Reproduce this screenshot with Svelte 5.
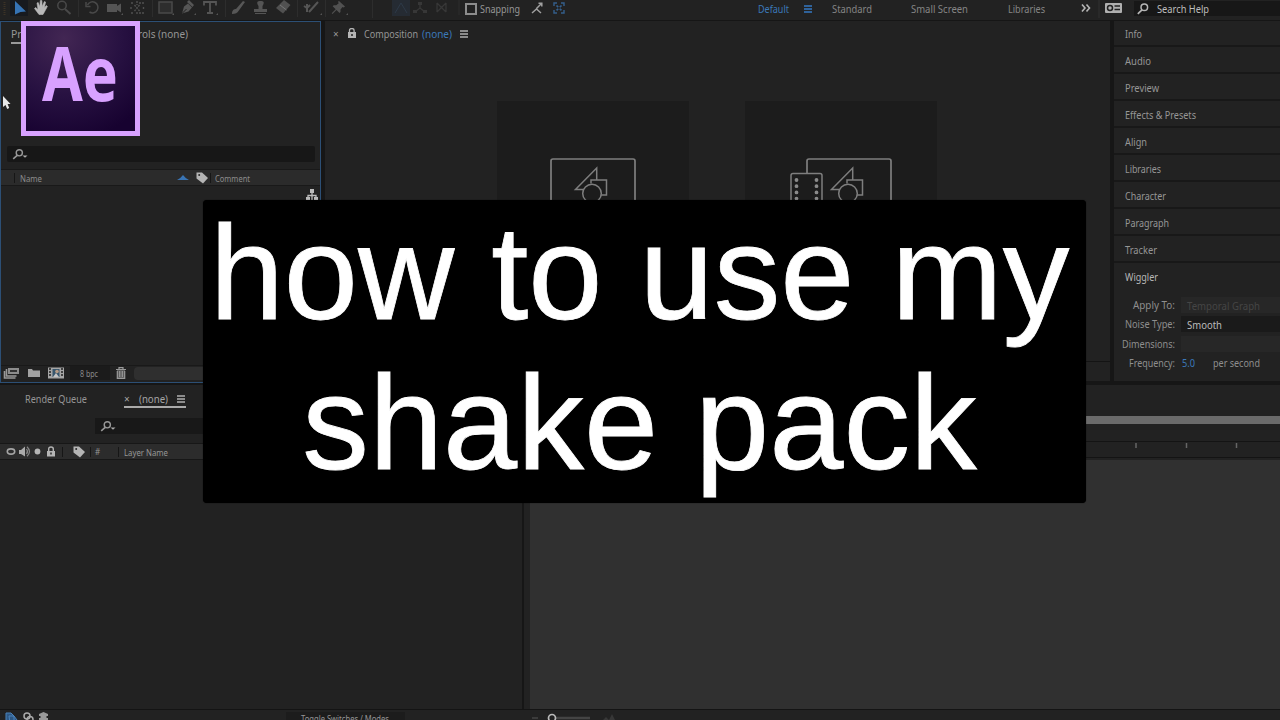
<script lang="ts">
  const workspaces = [
    { name: 'Standard', left: 20, width: 40 },
    { name: 'Small Screen', left: 39, width: 57 },
    { name: 'Libraries', left: 40, width: 37 },
  ];

  const panels = [
    { name: 'Info', width: 17 },
    { name: 'Audio', width: 26 },
    { name: 'Preview', width: 34 },
    { name: 'Effects & Presets', width: 71 },
    { name: 'Align', width: 22 },
    { name: 'Libraries', width: 36 },
    { name: 'Character', width: 41 },
    { name: 'Paragraph', width: 44 },
    { name: 'Tracker', width: 32 },
  ];
</script>

<!-- text squeezed to a fixed run length, the UI face is narrower than the fallback -->
{#snippet label(text: string, width: number, size = 10.5)}
  <svg class="label" {width} height="14" style="font-size:{size}px">
    <text x="0" y="11" textLength={width} lengthAdjust="spacingAndGlyphs">{text}</text>
  </svg>
{/snippet}

{#snippet tag()}
  <svg class="icon" width="12" height="12" viewBox="0 0 12 12">
    <path d="M.5.500h5.500l6 5.500-5 5.500-6.500-5z" fill="#b5b5b5" />
    <circle cx="3.200" cy="3" r="1" fill="#2b2b2b" />
  </svg>
{/snippet}

{#snippet search()}
  <svg class="icon" width="16" height="12" viewBox="0 0 16 12">
    <circle cx="7.300" cy="3.800" r="3.100" fill="none" stroke="#999" stroke-width="1.400" />
    <path d="M5.200 6.300L1.200 9.800" stroke="#999" stroke-width="1.600" />
    <path d="M10.500 6.500h5L13 8.700z" fill="#aaa" />
  </svg>
{/snippet}

{#snippet shapes()}
  <g fill="none" stroke="#7e7e7e" stroke-width="1.5">
    <path d="M36 31.500h-10.500L46.700 10v11.500M41 25.500v-3.500h15.500v15h-6" />
    <circle cx="42" cy="35.500" r="9.300" fill="#1c1c1c" />
  </g>
{/snippet}

<div class="app">
  <header>
    <svg class="tools" width="464" height="20" viewBox="0 0 464 20">
      <path d="M4.500 2v14" stroke="#3c3326" stroke-width="2" stroke-dasharray="1 1" />
      <path d="M10 0h18v16H10z" fill="#171a1f" />
      <path d="M15 1L26 11.500l-5.500.500-5.500 2.500z" fill="#3674b5" />
      <path
        d="M39 14.500l-4.500-6 1-1 2.500 2L37 3l1.200-.5 1.600 4.300.5-6.300h1.600l.2 6 2.300-5 1.200.6-1.200 5.400 2-2 1 .9-3 5.600-1.400 2.500z"
        fill="#b8b8b8"
        stroke="#b8b8b8"
        stroke-width=".6"
      />
      <g fill="none" stroke="#494949" stroke-width="1.500">
        <circle cx="62" cy="5.500" r="4.200" />
        <path d="M65 9l5.500 5" stroke-width="2" />
        <path d="M87.500 5a5.500 5.500 0 1 1 2 7M86 2v4.500h4.500" />
        <path d="M159 2h13v11h-13z" fill="#2d2d2d" />
      </g>
      <path d="M107 4h10v2l4-2.500v9L117 10v2h-10z" fill="#555" />
      <path
        d="M131 3h3M139 3h5M131 13h3M139 13h5M137 1v4M137 12v3M131 7v3M143.500 7v3M134.500 5l5 6M139.500 5l-5 6"
        stroke="#505050"
        stroke-width="1.400"
        stroke-dasharray="2 1"
      />
      <path d="M182 13.500l2-7 4-3 4 4-3.500 4zM187 2l2-2 5 5-1.500 2z" fill="#565656" />
      <path d="M182.500 13l4-4" stroke="#222" />
      <path d="M204 5.500V2h12v3.500M210 2v11M207 13h6" fill="none" stroke="#555" stroke-width="1.800" />
      <path d="M232 14c0-4 2-5 4-5l7-8 2 1-6.500 9c-1 2-3 3-6.500 3z" fill="#575757" />
      <path d="M254 9h4.500V6C256 2 257.500 1 260.500 1s4.500 1 2 5v3h4.500v3h-13zM255 13h11v1h-11z" fill="#555" />
      <path d="M276 8l8-8 6.500 5-7.500 8.500z" fill="#515151" />
      <path d="M280 5l6.500 5" stroke="#777" />
      <path d="M307 4v8M304 6l3 2 3-3M309 12l9-10" fill="none" stroke="#555" stroke-width="2" />
      <path d="M339 1l6 5.500-1.300 1-1.200-.5-2 2.500v2.500l-1 1-3-3-4 4-.8-.8 4-4-3-3 1-1h2.500l2.500-2-.7-1.400z" fill="#515151" />
      <path
        d="M123 15h-2l2-2zM174 15h-2l2-2zM196 15h-2l2-2zM218 15h-2l2-2zM322 15h-2l2-2zM348 15h-2l2-2z"
        fill="#555"
      />
      <path d="M78.500 0v17M152.500 0v17M225.500 0v17M297.500 0v17M325.500 0v17M372.500 0v18M459 0v15" stroke="#2d2d2d" />
      <path d="M392 0h18v16h-18z" fill="#252b33" />
      <path d="M395 13l6-10 6 10" fill="none" stroke="#2d3947" />
      <path d="M420 3v5l-5 4M420 8l5 4M437 3l9 9M446 3l-9 9M437 3v9M446 3v9" fill="none" stroke="#373737" stroke-width="1.300" />
      <path d="M418 2h4v3h-4zM413 10h4v3h-4zM423 10h4v3h-4z" fill="#373737" />
    </svg>
    <span class="box"></span>
    <span class="snap">{@render label('Snapping', 40)}</span>
    <svg class="icon magnets" width="36" height="14" viewBox="0 0 36 14">
      <path d="M1 12l4.500-4 4.500 4M5.500 7.500L10 3M7.500 2.200h3.300v3.300" fill="none" stroke="#a0a0a0" stroke-width="1.500" />
      <path d="M23 5V2h3M30 2h3v3M33 9v3h-3M26 12h-3V9" fill="none" stroke="#345f8c" stroke-width="1.400" />
      <path d="M25.500 4.500l5 5M30.500 4.500l-5 5" stroke="#345f8c" stroke-width="1.700" stroke-dasharray="2.400 2.200" />
    </svg>
    <span class="default">{@render label('Default', 31)}</span>
    <span class="burger blue"></span>
    {#each workspaces as ws}
      <span class="workspace" style="margin-left:{ws.left}px">{@render label(ws.name, ws.width)}</span>
    {/each}
    <svg class="icon more" width="34" height="18" viewBox="0 0 34 18">
      <path d="M1 4.500L4 8 1 11.500M5.500 4.500L8.500 8l-3 3.500" fill="none" stroke="#b5b5b5" stroke-width="1.600" />
      <path d="M18 0v18" stroke="#303030" />
    </svg>
    <svg class="icon settings" width="17" height="10" viewBox="0 0 17 10">
      <rect width="17" height="10" rx="1" fill="#b0b0b0" />
      <circle cx="5" cy="5" r="2.500" fill="none" stroke="#222" stroke-width="1.500" />
      <path d="M9.500 3h5.500M9.500 6.500h5.500" stroke="#222" stroke-width="1.500" />
    </svg>
    <div class="help">
      <svg class="icon" width="12" height="12" viewBox="0 0 12 12">
        <circle cx="7.300" cy="4.300" r="3.300" fill="none" stroke="#b5b5b5" stroke-width="1.500" />
        <path d="M5 6.800L.8 10.800" stroke="#b5b5b5" stroke-width="1.700" />
      </svg>
      {@render label('Search Help', 52)}
    </div>
  </header>

  <div class="upper">
    <section class="project">
      <div class="tabs">
        <span class="tab">{@render label('Project', 34)}</span>
        <span class="controls">{@render label('Effect Controls (none)', 101)}</span>
      </div>
      <div class="find">{@render search()}</div>
      <div class="columns">
        <i></i>
        <span class="name">{@render label('Name', 22, 9)}</span>
        <svg class="icon" width="12" height="5"><path d="M0 5q3-1 6-5 3 4 6 5z" fill="#3974b4" /></svg>
        <span class="tag">{@render tag()}</span>
        <i></i>
        <span class="comment">{@render label('Comment', 35, 9)}</span>
      </div>
      <div class="items">
        <svg class="icon" width="14" height="16" viewBox="0 0 14 16">
          <path d="M5 1h4v4H5zM1 9h4v4H1zM9 9h4v4H9z" fill="#bbb" />
          <path d="M7 5v3M3 9V7.500h8V9M7 8v5" fill="none" stroke="#bbb" stroke-width="1.300" />
        </svg>
      </div>
      <div class="footer">
        <svg class="icon" width="64" height="14" viewBox="0 0 64 14">
          <path d="M2.500 5v7h11M4.500 3v7h10" fill="none" stroke="#999" stroke-width="1.600" />
          <path d="M6 2h11v6H6z" fill="#8c8c8c" />
          <path d="M8 4h7v2H8z" fill="#333" />
          <path d="M26 3h4l1 1.500h7V11H26z" fill="#a2a2a2" />
          <path d="M46 1.500h16v11H46z" fill="#a6a6a6" />
          <path d="M47 3h2M47 6h2M47 9h2M59 3h2M59 6h2M59 9h2" stroke="#222" stroke-width="1.500" />
          <path d="M50.500 3h7v8h-7z" fill="#38566d" />
          <circle cx="55" cy="5.500" r="1.800" fill="#b59a85" />
          <path d="M51 11l3-4 3 4z" fill="#c4c4c4" />
        </svg>
        <span class="bpc">{@render label('8 bpc', 18, 9)}</span>
        <svg class="icon" width="10" height="12" viewBox="0 0 10 12">
          <path d="M1 3h8v9H1z" fill="#5a5a5a" />
          <path d="M0 2.500h10M3 2V.7h4V2M1.300 4v7.300h7.400V4M3.700 4v6M6.300 4v6" fill="none" stroke="#999" stroke-width="1.200" />
        </svg>
        <span class="scroll"></span>
      </div>
    </section>

    <section class="composition">
      <div class="comptab">
        <span class="close">×</span>
        <svg class="icon lock" width="8" height="10" viewBox="0 0 8 10">
          <path d="M0 4h8v6H0z" fill="#b5b5b5" />
          <path d="M1.500 4V2.500q0-2 2.300-2t2.300 2V4" fill="none" stroke="#b5b5b5" stroke-width="1.300" />
          <path d="M4 6v2" stroke="#222" stroke-width="1.500" />
        </svg>
        {@render label('Composition', 54)}
        <span class="none">{@render label('(none)', 30)}</span>
        <span class="burger"></span>
      </div>
      <div class="cards">
        <div class="card">
          <svg width="86" height="62" viewBox="0 0 86 62">
            <rect x="1" y="1" width="84" height="60" rx="2" fill="none" stroke="#7e7e7e" stroke-width="1.700" />
            {@render shapes()}
          </svg>
        </div>
        <div class="card">
          <svg class="footage" width="102" height="62" viewBox="0 0 102 62">
            <rect x="17" y="1" width="84" height="60" rx="2" fill="none" stroke="#7e7e7e" stroke-width="1.700" />
            <rect x="1" y="15.500" width="31" height="46" rx="2" fill="#1c1c1c" stroke="#7e7e7e" stroke-width="1.500" />
            <path
              d="M6.500 22v36M26.500 22v36"
              stroke="#8a8a8a"
              stroke-width="3.800"
              stroke-dasharray="0 6.200"
              stroke-linecap="round"
            />
            <g transform="translate(16)">{@render shapes()}</g>
          </svg>
        </div>
      </div>
      <div class="viewbar"></div>
    </section>

    <aside>
      {#each panels as panel}
        <div class="panel">{@render label(panel.name, panel.width)}</div>
      {/each}
      <div class="panel wiggler">{@render label('Wiggler', 33)}</div>
      <div class="fields">
        <span class="key">{@render label('Apply To:', 42)}</span>
        <span class="select off">{@render label('Temporal Graph', 73)}</span>
        <span class="key">{@render label('Noise Type:', 50)}</span>
        <span class="select">{@render label('Smooth', 35)}</span>
        <span class="key">{@render label('Dimensions:', 53)}</span>
        <span class="select off"></span>
        <span class="key">{@render label('Frequency:', 46)}</span>
        <span class="value">
          {@render label('5.0', 13)}
          <span class="unit">{@render label('per second', 47)}</span>
        </span>
      </div>
    </aside>
  </div>

  <div class="timeline">
    <div class="queue">
      {@render label('Render Queue', 62)}
      <div class="current">
        <span class="close">×</span>
        {@render label('(none)', 29)}
        <span class="burger"></span>
      </div>
    </div>
    <div class="split">
      <div class="layers">
        <div class="layerfind"><div>{@render search()}</div></div>
        <div class="layerhead">
          <svg class="icon" width="52" height="12" viewBox="0 0 52 12">
            <ellipse cx="5" cy="5.500" rx="3.700" ry="2.600" fill="none" stroke="#a5a5a5" stroke-width="1.600" />
            <path d="M13 4h2l4-3.500v10L15 8h-2z" fill="#aaa" />
            <path d="M20.500 3q2 2.500 0 5M21 .7q5 4.800 0 9.600" fill="none" stroke="#888" stroke-width="1.200" />
            <circle cx="31.500" cy="5.500" r="2.900" fill="#b5b5b5" />
            <path d="M41 5h8v5.500h-8z" fill="#b5b5b5" />
            <path d="M42.700 5V3q0-2 2.300-2t2.300 2v2" fill="none" stroke="#b5b5b5" stroke-width="1.400" />
            <path d="M45 6.500v2" stroke="#222" stroke-width="1.400" />
          </svg>
          <i></i>
          <span class="layertag">{@render tag()}</span>
          <i></i>
          <span class="hash">#</span>
          <i></i>
          <span class="layername">{@render label('Layer Name', 44, 9)}</span>
        </div>
      </div>
      <div class="track">
        <div class="ruler"></div>
        <div class="ticks">
          <svg width="750" height="15"><path d="M606 1v5M656.500 1v5M706.500 1v5" stroke="#666" stroke-width="1.500" /></svg>
        </div>
        <div class="work"></div>
      </div>
    </div>
    <footer>
      <svg class="icon" width="45" height="11" viewBox="0 0 45 11">
        <path d="M1 1h5l3 3v6H1zM4 4h5l3 4v3H5z" fill="#2d5885" stroke="#4a82ba" />
        <circle cx="22" cy="4" r="3" fill="none" stroke="#aaa" stroke-width="1.500" />
        <circle cx="25" cy="7.500" r="3" fill="none" stroke="#aaa" stroke-width="1.500" />
        <path d="M34 2l4.500-2L43 2v2h-1.500v2H43v3l-4.500 2L34 9V6h1.500V4H34z" fill="#999" />
      </svg>
      <div class="toggle">{@render label('Toggle Switches / Modes', 88, 9)}</div>
      <svg class="icon zoom" width="90" height="11" viewBox="0 0 90 11">
        <path d="M2 6h6" stroke="#3b3b3b" stroke-width="2" />
        <path d="M21 6h39" stroke="#444" stroke-width="2.500" />
        <circle cx="22" cy="6" r="3.500" fill="#222" stroke="#bbb" stroke-width="1.700" />
        <path d="M71 10l5-5 3 3 3-6 4 8z" fill="#373737" />
      </svg>
    </footer>
  </div>

  <div class="logo">
    <svg width="109" height="105"><text x="16" y="75" textLength="76" lengthAdjust="spacingAndGlyphs">Ae</text></svg>
  </div>
  <svg class="cursor" width="9" height="15" viewBox="0 0 9 15">
    <path d="M1 1v11l2.500-2 1.700 4 2-.9L5.600 9H8.500z" fill="#e8e8e8" />
  </svg>
  <div class="title"><p>how to use my<br />shake pack</p></div>
</div>

<style>
  :global(body) {
    margin: 0;
    background: #161616;
  }

  .app {
    position: relative;
    display: flex;
    flex-direction: column;
    width: 1280px;
    height: 720px;
    overflow: hidden;
    background: #161616;
    color: #969696;
    font-family: "Noto Sans", "Open Sans", sans-serif;
    font-size: 10.5px;
  }

  .app * {
    box-sizing: border-box;
  }

  svg {
    display: block;
    flex: none;
  }

  .label {
    overflow: visible;
    fill: currentColor;
  }

  header {
    display: flex;
    align-items: flex-start;
    height: 20px;
    flex: none;
    background: #222;
  }

  header > * {
    flex: none;
  }

  .box {
    width: 12px;
    height: 12px;
    margin: 3px 0 0 1px;
    border: 2px solid #8c8c8c;
  }

  .snap {
    margin: 2px 0 0 3px;
  }

  .magnets {
    margin: 1px 0 0 11px;
  }

  .default {
    margin: 2px 0 0 191px;
    color: #3b78b9;
  }

  .burger {
    width: 8px;
    height: 8px;
    background: repeating-linear-gradient(#8c8c8c 0 2px, transparent 2px 3px);
  }

  .burger.blue {
    margin: 5px 0 0 15px;
    background: repeating-linear-gradient(#2f629a 0 2px, transparent 2px 3px);
  }

  .workspace {
    margin-top: 2px;
    color: #858585;
  }

  .more {
    margin-left: 36px;
  }

  .settings {
    margin: 3px 0 0 -10px;
  }

  .help {
    display: flex;
    gap: 8px;
    flex: 1;
    height: 15px;
    margin: 1px 0 0 12px;
    padding: 1px 0 0 3px;
    background: #171717;
    color: #bdbdbd;
  }

  .help .icon {
    margin-top: 1px;
  }

  .upper {
    display: flex;
    height: 363px;
    flex: none;
    padding-top: 1px;
  }

  .project {
    display: flex;
    flex-direction: column;
    width: 321px;
    height: 362px;
    border: 1px solid #2c4f75;
    background: #222;
  }

  .tabs {
    display: flex;
    height: 124px;
    padding: 5px 0 0 10px;
  }

  .tab {
    height: 17px;
    border-bottom: 2px solid #999;
  }

  .controls {
    margin-left: 42px;
  }

  .find {
    height: 16px;
    margin: 0 5px 0 6px;
    padding: 3px 0 0 5px;
    border-radius: 2px;
    background: #171717;
  }

  .columns {
    display: flex;
    align-items: center;
    height: 17px;
    margin-top: 7px;
    border-top: 1px solid #191919;
    border-bottom: 1px solid #191919;
    background: #2b2b2b;
    color: #8c8c8c;
  }

  .columns i,
  .layerhead i {
    width: 1px;
    height: 10px;
    background: #161616;
  }

  .columns i:first-child {
    margin-left: 13px;
  }

  .name {
    margin: 0 135px 0 5px;
  }

  .tag {
    margin: 0 2px 0 7px;
  }

  .comment {
    margin-left: 4px;
  }

  .items {
    display: flex;
    justify-content: flex-end;
    align-items: flex-start;
    flex: 1;
    padding: 2px 1px 0 0;
  }

  .footer {
    display: flex;
    align-items: center;
    height: 17px;
    padding: 0 0 2px 1px;
    border-top: 1px solid #191919;
  }

  .bpc {
    width: 40px;
    height: 14px;
    margin: 0 6px 0 4px;
    padding-left: 10px;
    background: #1b1b1b;
    color: #888;
  }

  .scroll {
    flex: 1;
    height: 13px;
    margin-left: 8px;
    border-radius: 4px;
    background: #2f2f2f;
  }

  .composition {
    display: flex;
    flex-direction: column;
    width: 785px;
    height: 360px;
    margin-left: 4px;
    background: #222;
  }

  .comptab {
    display: flex;
    align-items: center;
    height: 26px;
    padding-left: 8px;
  }

  .close {
    width: 7px;
    font-size: 10px;
    line-height: 12px;
  }

  .lock {
    margin: 0 8px 3px;
  }

  .none {
    margin: 0 8px 0 4px;
    color: #3b78b9;
  }

  .cards {
    display: flex;
    gap: 56px;
    flex: 1;
    padding: 54px 0 0 172px;
  }

  .card {
    width: 192px;
    height: 190px;
    padding: 57px 0 0 53px;
    background: #1c1c1c;
  }

  .footage {
    margin-left: -8px;
  }

  .viewbar {
    height: 20px;
    border-top: 1px solid #141414;
  }

  aside {
    width: 166px;
    height: 360px;
    margin-left: 4px;
    background: #222;
  }

  .panel {
    height: 27px;
    padding: 7px 0 0 11px;
    border-bottom: 2px solid #181818;
  }

  .panel:first-child {
    height: 26px;
    padding-top: 6px;
  }

  .panel.wiggler {
    border: 0;
    color: #b8b8b8;
  }

  .fields {
    display: grid;
    grid-template-columns: 61px 1fr;
    grid-auto-rows: 19.4px;
    column-gap: 6px;
    margin-top: 4px;
    color: #8e8e8e;
  }

  .key {
    display: flex;
    justify-content: flex-end;
    padding-top: 4px;
  }

  .select {
    height: 16px;
    margin: 3px 0 0;
    padding: 2px 0 0 6px;
    background: #1a1a1a;
    color: #bcbcbc;
  }

  .select.off {
    background: #272727;
    color: #454545;
  }

  .value {
    display: flex;
    gap: 18px;
    padding: 4px 0 0 1px;
    color: #3b78b9;
  }

  .unit {
    color: #8e8e8e;
  }

  .timeline {
    display: flex;
    flex-direction: column;
    flex: 1;
    margin-top: 2px;
    background: #222;
  }

  .queue {
    display: flex;
    height: 31px;
    padding: 7px 0 0 25px;
  }

  .current {
    display: flex;
    align-items: center;
    width: 62px;
    height: 16px;
    margin-left: 37px;
    border-bottom: 2px solid #aaa;
    color: #a5a5a5;
  }

  .current .label {
    margin: 0 9px 0 8px;
  }

  .split {
    display: flex;
    height: 293px;
  }

  .layers {
    width: 524px;
    border-right: 2px solid #161616;
  }

  .layerfind {
    height: 27px;
    padding: 2px 0 0 95px;
  }

  .layerfind div {
    height: 16px;
    padding: 3px 0 0 5px;
    background: #181818;
  }

  .layerhead {
    display: flex;
    align-items: center;
    height: 17px;
    padding-left: 6px;
    border-top: 1px solid #171717;
    border-bottom: 1px solid #171717;
    background: #2c2c2c;
  }

  .layerhead i:nth-of-type(1) {
    margin-left: 4px;
  }

  .layertag {
    margin: 0 5px 0 10px;
  }

  .hash {
    width: 27px;
    padding-left: 4px;
    font-size: 8px;
  }

  .layername {
    margin-left: 5px;
  }

  .track {
    display: flex;
    flex-direction: column;
    flex: 1;
    margin-left: 6px;
  }

  .ruler {
    height: 8px;
    background: #6b6b6b;
  }

  .ticks {
    height: 17px;
    margin-top: 17px;
    border-top: 1px solid #141414;
    border-bottom: 1px solid #141414;
  }

  .work {
    flex: 1;
    margin-top: 2px;
    background: #303030;
  }

  footer {
    display: flex;
    align-items: flex-start;
    flex: 1;
    padding: 2px 0 0 5px;
    border-top: 1px solid #141414;
  }

  .toggle {
    width: 119px;
    height: 12px;
    margin-left: 236px;
    padding-left: 15px;
    background: #1c1c1c;
  }

  .toggle .label {
    margin-top: -1px;
  }

  .zoom {
    margin-left: 125px;
  }

  .logo {
    position: absolute;
    top: 21px;
    left: 21px;
    width: 119px;
    height: 115px;
    border: 5px solid #d8a1ff;
    background: radial-gradient(circle at 35% 12%, #422653, #271141 50%, #170230 88%);
    color: #d8a1ff;
    font-size: 75px;
    font-weight: 700;
  }

  .logo text {
    fill: currentColor;
  }

  .cursor {
    position: absolute;
    top: 95px;
    left: 2px;
  }

  .title {
    position: absolute;
    top: 200px;
    left: 203px;
    width: 883px;
    height: 303px;
    border-radius: 4px;
    background: #000;
    box-shadow: 0 0 1px #000;
    color: #fff;
    font: 133.33px/150px "Liberation Sans", Arial, sans-serif;
    text-align: center;
    white-space: nowrap;
    -webkit-text-stroke: 0.8px #fff;
  }

  .title p {
    margin: -2px 10px 0 0;
  }
</style>
